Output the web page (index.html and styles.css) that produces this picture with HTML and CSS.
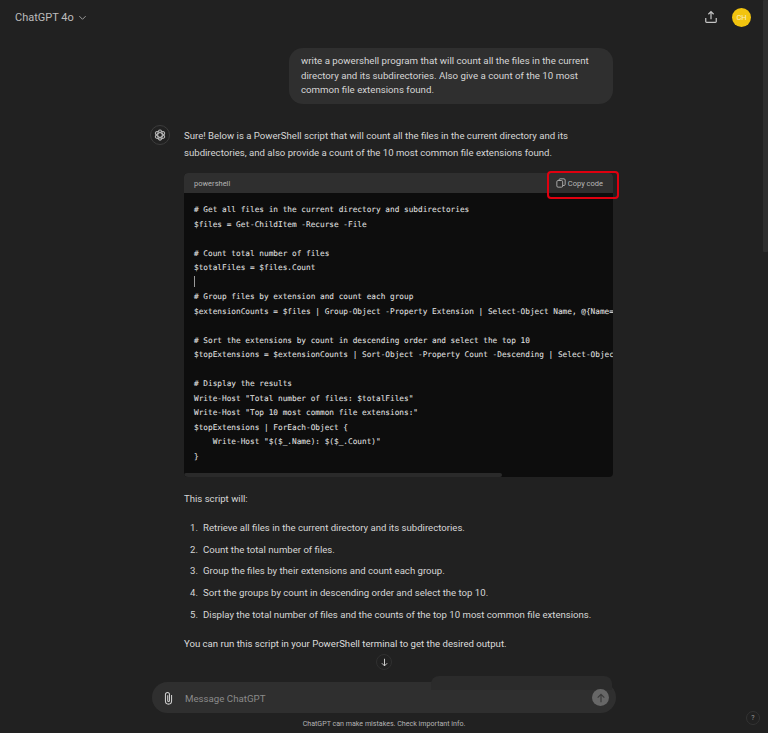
FILE: index.html
```html
<!DOCTYPE html>
<html lang="en">
<head>
<meta charset="utf-8">
<title>ChatGPT</title>
<link rel="stylesheet" href="styles.css">
</head>
<body>
<div class="app">
  <header class="topbar">
    <div class="model">ChatGPT 4o
      <svg class="chev" viewBox="0 0 10 10" width="9" height="9"><path d="M1.500 3.500 5 7l3.500-3.500" fill="none" stroke="#9b9b9b" stroke-width="1.100"/></svg>
    </div>
    <div class="top-actions">
      <svg viewBox="0 0 16 16" width="14" height="14"><path d="M8 10.500V2M5 4.800 8 1.800l3 3M2 9v4.200c0 .6.4 1 1 1h10c.6 0 1-.4 1-1V9" fill="none" stroke="#c4c4c4" stroke-width="1.400"/></svg>
      <div class="avatar">CH</div>
    </div>
  </header>
  <main class="thread">
    <div class="user-row">
      <div class="user-bubble">write a powershell program that will count all the files in the current directory and its subdirectories. Also give a count of the 10 most common file extensions found.</div>
    </div>
    <div class="reply">
      <div class="bot-icon">
        <svg viewBox="0 0 16 16" width="12" height="12"><g fill="none" stroke="#b5b5b5" stroke-width="1.400"><ellipse cx="8" cy="8" rx="3" ry="6.800"/><ellipse cx="8" cy="8" rx="3" ry="6.800" transform="rotate(60 8 8)"/><ellipse cx="8" cy="8" rx="3" ry="6.800" transform="rotate(120 8 8)"/></g></svg>
      </div>
      <div class="reply-body">
        <p class="para intro">Sure! Below is a PowerShell script that will count all the files in the current directory and its subdirectories, and also provide a count of the 10 most common file extensions found.</p>
        <div class="code-card">
          <div class="code-head">
            <span class="lang">powershell</span>
            <span class="copy">
              <svg viewBox="0 0 12 12" width="10" height="10"><g fill="none" stroke="#bdbdbd" stroke-width="1"><rect x="1" y="3" width="7" height="8" rx="1.500"/><path d="M3.500 3V2.400C3.500 1.600 4.100 1 4.900 1H9.600C10.400 1 11 1.600 11 2.400V7.600C11 8.400 10.400 9 9.600 9H8"/></g></svg>
              Copy code
            </span>
          </div>
          <pre class="code"># Get all files in the current directory and subdirectories
$files = Get-ChildItem -Recurse -File

# Count total number of files
$totalFiles = $files.Count
<span class="caret"></span>
# Group files by extension and count each group
$extensionCounts = $files | Group-Object -Property Extension | Select-Object Name, @{Name='Count';Expression={$_.Count}}

# Sort the extensions by count in descending order and select the top 10
$topExtensions = $extensionCounts | Sort-Object -Property Count -Descending | Select-Object -First 10

# Display the results
Write-Host "Total number of files: $totalFiles"
Write-Host "Top 10 most common file extensions:"
$topExtensions | ForEach-Object {
    Write-Host "$($_.Name): $($_.Count)"
}</pre>
          <div class="hscroll"><div class="hthumb"></div></div>
        </div>
        <div class="copy-mark"></div>
        <p class="para lead">This script will:</p>
        <ol class="steps">
          <li>Retrieve all files in the current directory and its subdirectories.</li>
          <li>Count the total number of files.</li>
          <li>Group the files by their extensions and count each group.</li>
          <li>Sort the groups by count in descending order and select the top 10.</li>
          <li>Display the total number of files and the counts of the top 10 most common file extensions.</li>
        </ol>
        <p class="para outro">You can run this script in your PowerShell terminal to get the desired output.</p>
      </div>
    </div>
  </main>
  <div class="down">
    <svg viewBox="0 0 12 12" width="9" height="9"><path d="M6 1v9.500M2.500 7 6 10.500 9.500 7" fill="none" stroke="#d0d0d0" stroke-width="1.300"/></svg>
  </div>
  <div class="composer-wrap">
    <div class="composer">
      <svg class="clip" viewBox="0 0 12 16" width="11" height="14"><path d="M9.500 4.500v7a3.500 3.500 0 0 1-7 0V4a2.300 2.300 0 0 1 4.600 0v7a1 1 0 0 1-2 0V4.800" fill="none" stroke="#d0d0d0" stroke-width="1.200"/></svg>
      <span class="placeholder">Message ChatGPT</span>
      <span class="send"><svg viewBox="0 0 12 12" width="10" height="10"><path d="M6 11V1.500M2 5.500l4-4 4 4" fill="none" stroke="#3a3a3a" stroke-width="1.400"/></svg></span>
    </div>
    <div class="disclaimer">ChatGPT can make mistakes. Check important info.</div>
  </div>
  <div class="help">?</div>
  <div class="scrollbar"><div class="thumb"></div></div>
</div>
</body>
</html>
```
FILE: styles.css
```css
* { box-sizing: border-box; }
html, body { margin: 0; height: 100%; }
body { background: #212121; color: #d6d6d6; font-family: Roboto, "Noto Sans", sans-serif; overflow: hidden; }
.app { position: relative; width: 768px; height: 733px; overflow: hidden; display: flex; flex-direction: column; }
.topbar { display: flex; justify-content: space-between; align-items: center; height: 34px; padding: 0 17px 0 15px; flex: none; }
.model { font-size: 11px; color: #bcbcbc; display: flex; align-items: center; gap: 4px; }
.top-actions { display: flex; align-items: center; gap: 14px; }
.avatar { width: 19px; height: 19px; border-radius: 50%; background: #f2c40f; color: #f8efc6; font-size: 7.500px; display: flex; align-items: center; justify-content: center; }
.thread { width: 429px; margin-left: 184px; flex: none; }
.user-row { display: flex; justify-content: flex-end; margin-top: 14px; }
.user-bubble { width: 324px; height: 56px; background: #2f2f2f; border-radius: 14px; padding: 6px 12px; font-size: 9.700px; line-height: 14.500px; color: #d6d6d6; }
.reply { position: relative; margin-top: 23px; }
.bot-icon { position: absolute; left: -34px; top: -2px; width: 20px; height: 20px; border-radius: 50%; border: 1px solid #3c3c3c; display: flex; align-items: center; justify-content: center; }
.para { margin: 0; font-size: 9.600px; color: #d6d6d6; }
.intro { line-height: 16.700px; padding-top: 1px; }
.code-card { margin-top: 11.600px; background: #0d0d0d; border-radius: 4px; overflow: hidden; }
.code-head { height: 20px; background: #2f2f2f; display: flex; justify-content: space-between; align-items: center; padding: 0 10px; }
.lang { font-size: 7.500px; color: #b4b4b4; }
.copy { font-size: 7.500px; color: #b8b8b8; display: flex; align-items: center; gap: 2px; }
.code { margin: 0; height: 284px; padding: 10px 10px 0; font-family: "DejaVu Sans Mono", "Liberation Mono", monospace; font-size: 7.750px; line-height: 14.500px; color: #dedede; -webkit-text-stroke: 0.1px #dedede; overflow: hidden; white-space: pre; }
.caret { display: inline-block; width: 1px; height: 11px; background: #9a9a9a; vertical-align: -2px; }
.hscroll { height: 4px; margin-top: -4px; position: relative; }
.hthumb { width: 318px; height: 4px; background: #2a2a2a; border-radius: 2px; }
.copy-mark { position: absolute; left: 363px; top: 44px; width: 72px; height: 28px; border: 2.500px solid #e0000f; border-radius: 4px; }
.lead { margin-top: 15px; line-height: 14px; }
.steps { list-style: none; counter-reset: step; margin: 15px 0 0; padding: 0 0 0 6px; font-size: 9.600px; display: flex; flex-direction: column; gap: 7.700px; }
.steps li { counter-increment: step; display: flex; line-height: 14px; }
.steps li::before { content: counter(step) "."; flex: none; width: 13px; }
.outro { margin-top: 15px; line-height: 14px; color: #dcdcdc; }
.down { position: absolute; left: 376px; top: 654px; width: 16px; height: 16px; border-radius: 50%; border: 1px solid #303030; background: #212121; display: flex; align-items: center; justify-content: center; }
.composer-wrap { position: absolute; left: 152px; top: 676px; width: 464px; }
.composer { position: absolute; left: 0; top: 6px; width: 464px; height: 31px; background: #2f2f2f; border-radius: 16px; display: flex; align-items: center; padding: 0 7px 0 11px; }
.composer::before { content: ""; position: absolute; left: 279px; top: -6px; width: 181px; height: 14px; background: #2b2b2b; border-radius: 8px 8px 0 0; }
.clip { flex: none; position: relative; }
.placeholder { margin-left: 11px; padding-top: 1px; font-size: 9.700px; color: #8a8a8a; flex: 1; position: relative; }
.send { width: 17px; height: 17px; border-radius: 50%; background: #676767; display: flex; align-items: center; justify-content: center; position: relative; }
.disclaimer { position: absolute; top: 43px; left: 0; width: 464px; text-align: center; font-size: 7.100px; color: #b4b4b4; }
.help { position: absolute; left: 746px; top: 711px; width: 14px; height: 14px; border-radius: 50%; border: 1px solid #333; color: #999; font-size: 7px; display: flex; align-items: center; justify-content: center; }
.scrollbar { position: absolute; right: 0; top: 0; width: 5px; height: 733px; }
.thumb { width: 5px; height: 252px; background: #2e2e2e; border-radius: 1px; }
```
